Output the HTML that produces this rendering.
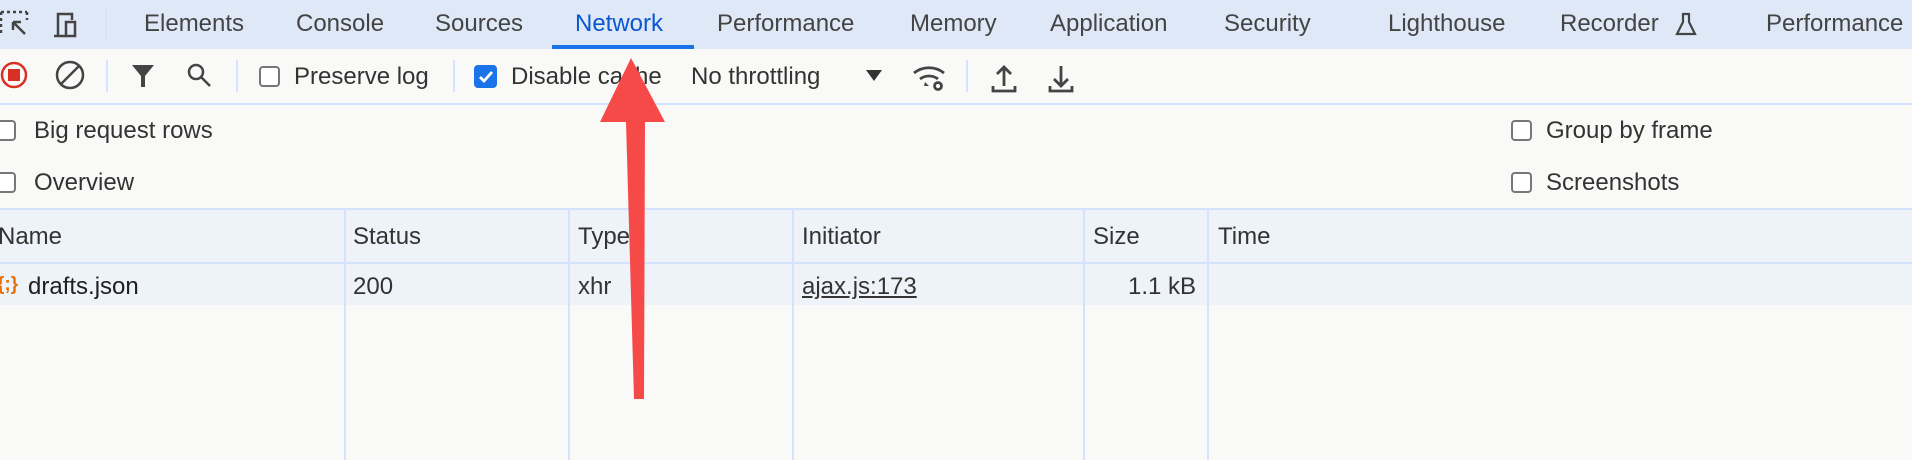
<!DOCTYPE html>
<html><head><style>
body{margin:0;width:1912px;height:460px;background:#f9f9f7;font-family:"Liberation Sans",sans-serif;color:#1f1f1f;position:relative;overflow:hidden}
.a{position:absolute;white-space:nowrap}
.tabs{position:absolute;left:0;top:0;width:1912px;height:49px;background:#dfe8f6}
.t{position:absolute;top:10px;font-size:24px;color:#444}
.f{font-size:24px;color:#333}
.cb{position:absolute;width:17px;height:17px;border:2px solid #777;border-radius:4px;background:#fff}
.vl{position:absolute;width:2px;background:#d3e3fd}
.hl{position:absolute;height:2px;background:#d3e3fd;left:0;width:1912px}
</style></head><body>
<div class="tabs"></div>
<svg class="a" style="left:0;top:8px" width="110" height="34"><g fill="none" stroke="#444" stroke-width="2.5"><path d="M1 4h26M1 4v22M27 4v8" stroke-dasharray="3 3"/><path d="M13 14l12 12M13 14h8M13 14v8"/><path d="M66 28H58V6h14v6M54 28h10"/><rect x="66" y="14" width="9" height="14"/></g></svg>
<div class="vl" style="left:105px;top:8px;height:32px"></div>
<div class="t" style="left:144px">Elements</div>
<div class="t" style="left:296px">Console</div>
<div class="t" style="left:435px">Sources</div>
<div class="t" style="left:575px;color:#0b57d0">Network</div>
<div class="a" style="left:552px;top:45px;width:142px;height:4px;background:#1a73e8"></div>
<div class="t" style="left:717px">Performance</div>
<div class="t" style="left:910px">Memory</div>
<div class="t" style="left:1050px">Application</div>
<div class="t" style="left:1224px">Security</div>
<div class="t" style="left:1388px">Lighthouse</div>
<div class="t" style="left:1560px">Recorder</div>
<svg class="a" style="left:1675px;top:12px" width="22" height="26"><path d="M7 2h8M8 2v8L2 22h18L14 10V2" fill="none" stroke="#444" stroke-width="2.2"/></svg>
<div class="t" style="left:1766px">Performance</div>

<svg class="a" style="left:0;top:60px" width="260" height="32"><circle cx="14" cy="15" r="12" fill="none" stroke="#d93025" stroke-width="2.5"/><rect x="8" y="9" width="12" height="12" fill="#d93025"/><circle cx="70" cy="15" r="13" fill="none" stroke="#444" stroke-width="2.5"/><path d="M61 24L79 6" stroke="#444" stroke-width="2.5"/><path d="M132 5h22l-9 11v11h-4V16z" fill="#444"/><circle cx="196" cy="12" r="7" fill="none" stroke="#444" stroke-width="2.5"/><path d="M201 17l9 9" stroke="#444" stroke-width="2.5"/></svg>
<div class="vl" style="left:106px;top:60px;height:32px"></div>
<div class="vl" style="left:236px;top:60px;height:32px"></div>
<div class="cb" style="left:259px;top:66px"></div>
<div class="a f" style="left:294px;top:63px">Preserve log</div>
<div class="vl" style="left:453px;top:60px;height:32px"></div>
<div class="a" style="left:474px;top:65px;width:23px;height:23px;background:#1a73e8;border-radius:4px"></div>
<svg class="a" style="left:474px;top:65px" width="23" height="23"><path d="M6 12l4 4 8-9" fill="none" stroke="#fff" stroke-width="2.8"/></svg>
<div class="a f" style="left:511px;top:63px">Disable cache</div>
<div class="a f" style="left:691px;top:63px">No throttling</div>
<svg class="a" style="left:866px;top:70px" width="16" height="12"><path d="M0 0h16L8 11z" fill="#333"/></svg>
<svg class="a" style="left:910px;top:60px" width="170" height="34"><g fill="none" stroke="#444" stroke-width="2.8"><path d="M4 13a24 24 0 0 1 30 0M10 19a15 15 0 0 1 18 0"/><circle cx="28" cy="26" r="3.5"/><path d="M83 26v5h22v-5M94 26V7M87 14l7-7 7 7M140 26v5h22v-5M151 6v20M144 19l7 7 7-7"/></g><path d="M15 22l4 4h-5z" fill="#444"/></svg>
<div class="vl" style="left:966px;top:60px;height:32px"></div>
<div class="hl" style="top:103px"></div>

<div class="cb" style="left:-5px;top:120px"></div>
<div class="a f" style="left:34px;top:117px">Big request rows</div>
<div class="cb" style="left:-5px;top:172px"></div>
<div class="a f" style="left:34px;top:169px">Overview</div>
<div class="cb" style="left:1511px;top:120px"></div>
<div class="a f" style="left:1546px;top:117px">Group by frame</div>
<div class="cb" style="left:1511px;top:172px"></div>
<div class="a f" style="left:1546px;top:169px">Screenshots</div>

<div class="a" style="left:0;top:209px;width:1912px;height:96px;background:#eef2f9"></div>
<div class="hl" style="top:208px"></div>
<div class="hl" style="top:262px"></div>
<div class="vl" style="left:344px;top:209px;height:251px"></div>
<div class="vl" style="left:568px;top:209px;height:251px"></div>
<div class="vl" style="left:792px;top:209px;height:251px"></div>
<div class="vl" style="left:1083px;top:209px;height:251px"></div>
<div class="vl" style="left:1207px;top:209px;height:251px"></div>
<div class="a f" style="left:-2px;top:223px">Name</div>
<div class="a f" style="left:353px;top:223px">Status</div>
<div class="a f" style="left:578px;top:223px">Type</div>
<div class="a f" style="left:802px;top:223px">Initiator</div>
<div class="a f" style="left:1093px;top:223px">Size</div>
<div class="a f" style="left:1218px;top:223px">Time</div>
<div class="a" style="left:-3px;top:274px;font-size:19px;color:#e8710a;font-weight:bold">{;}</div>
<div class="a f" style="left:28px;top:273px;color:#1f1f1f">drafts.json</div>
<div class="a f" style="left:353px;top:273px">200</div>
<div class="a f" style="left:578px;top:273px">xhr</div>
<div class="a f" style="left:802px;top:273px;text-decoration:underline">ajax.js:173</div>
<div class="a f" style="left:1128px;top:273px">1.1 kB</div>

<svg class="a" style="left:0;top:0" width="1912" height="460"><path d="M631 58L665 122L645 122L644 399L634 399L626 122L600 122Z" fill="#f64a48"/></svg>
</body></html>
